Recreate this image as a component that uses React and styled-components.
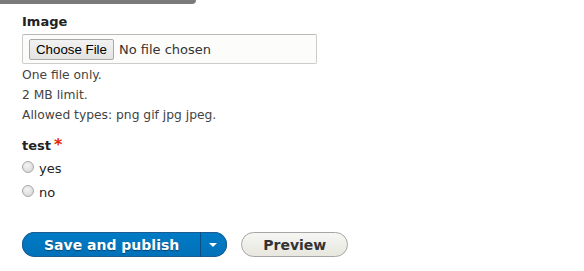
import React from "react";
import styled, { createGlobalStyle } from "styled-components";

const GlobalStyle = createGlobalStyle`
  html, body {
    margin: 0;
    padding: 0;
    background: #ffffff;
  }
  body {
    font-family: "DejaVu Sans", "Lucida Grande", sans-serif;
    font-size: 13px;
    color: #333333;
  }
`;

const Page = styled.div`
  width: 584px;
  height: 271px;
  overflow: hidden;
`;

const TopTab = styled.div`
  width: 196px;
  height: 4px;
  background: #7b7b7b;
  border-bottom-right-radius: 5px;
`;

const Form = styled.div`
  padding: 9px 0 0 22px;
`;

const FormItem = styled.div`
  margin-bottom: ${(p) => p.$gap || 0}px;
`;

const Label = styled.div`
  font-weight: 700;
  font-size: 13px;
  line-height: 18px;
  color: #222222;
  margin-bottom: ${(p) => (p.$tight ? 1 : 3)}px;
`;

const Required = styled.span`
  color: #e62600;
  font-size: 16px;
  line-height: 10px;
  margin-left: 3px;
  vertical-align: 0;
`;

const FileBox = styled.div`
  box-sizing: border-box;
  width: 295px;
  height: 30px;
  border: 1px solid #cccccc;
  border-top-color: #b8b8b8;
  border-radius: 2px;
  background: #fcfcfa;
  display: flex;
  align-items: center;
  padding-left: 6px;
  gap: 5px;
`;

const ChooseButton = styled.button`
  font-family: "Liberation Sans", Arial, sans-serif;
  font-size: 13.3px;
  color: #000000;
  height: 21px;
  padding: 0 6px;
  border: 1px solid #a9a9a9;
  border-radius: 2px;
  background: linear-gradient(#f2f2f2, #e3e3e3);
`;

const FileStatus = styled.span`
  font-size: 13px;
  color: #333333;
`;

const Description = styled.div`
  font-size: 12.3px;
  line-height: 20px;
  color: #444444;
  padding-top: 1px;
`;

const RadioRow = styled.label`
  display: flex;
  align-items: center;
  gap: 5px;
  height: 24px;
  font-size: 13px;
  color: #222222;
`;

const RadioCircle = styled.span`
  box-sizing: border-box;
  width: 12px;
  height: 12px;
  border-radius: 50%;
  border: 1px solid #a8a8a8;
  background: radial-gradient(circle at 40% 35%, #f4f4f4, #d2d2d2);
  margin-top: -3px;
`;

const Actions = styled.div`
  display: flex;
  align-items: center;
  gap: 14px;
`;

const SplitButton = styled.div`
  display: flex;
  height: 25px;
  border-radius: 13px;
  overflow: hidden;
  background: linear-gradient(#007bc6, #0071b8);
  box-shadow: inset 0 0 0 1px #1e5c90;
`;

const PrimaryButton = styled.button`
  font-family: "DejaVu Sans", sans-serif;
  font-weight: 700;
  font-size: 14px;
  color: #ffffff;
  text-shadow: 0 1px 1px rgba(0, 0, 0, 0.4);
  background: transparent;
  border: none;
  padding: 0 21px 0 22px;
  height: 100%;
`;

const DropToggle = styled.button`
  width: 27px;
  height: 100%;
  border: none;
  border-left: 1px solid #0a4f85;
  background: transparent;
  display: flex;
  align-items: center;
  justify-content: center;
  padding: 0;
`;

const Caret = styled.span`
  width: 0;
  height: 0;
  border-left: 4px solid transparent;
  border-right: 4px solid transparent;
  border-top: 4px solid #ffffff;
  margin-left: -2px;
`;

const SecondaryButton = styled.button`
  font-family: "DejaVu Sans", sans-serif;
  font-weight: 700;
  font-size: 14px;
  color: #333333;
  height: 25px;
  padding: 0 21px;
  border: 1px solid #a6a6a6;
  border-radius: 13px;
  background: linear-gradient(#f6f6f3, #e7e7df);
`;

export default function App() {
  return (
    <Page>
      <GlobalStyle />
      <TopTab />
      <Form>
        <FormItem $gap={12}>
          <Label>Image</Label>
          <FileBox>
            <ChooseButton>Choose File</ChooseButton>
            <FileStatus>No file chosen</FileStatus>
          </FileBox>
          <Description>
            <div>One file only.</div>
            <div>2 MB limit.</div>
            <div>Allowed types: png gif jpg jpeg.</div>
          </Description>
        </FormItem>
        <FormItem $gap={28}>
          <Label $tight>
            test<Required>*</Required>
          </Label>
          <RadioRow>
            <RadioCircle />
            yes
          </RadioRow>
          <RadioRow>
            <RadioCircle />
            no
          </RadioRow>
        </FormItem>
        <Actions>
          <SplitButton>
            <PrimaryButton>Save and publish</PrimaryButton>
            <DropToggle>
              <Caret />
            </DropToggle>
          </SplitButton>
          <SecondaryButton>Preview</SecondaryButton>
        </Actions>
      </Form>
    </Page>
  );
}
